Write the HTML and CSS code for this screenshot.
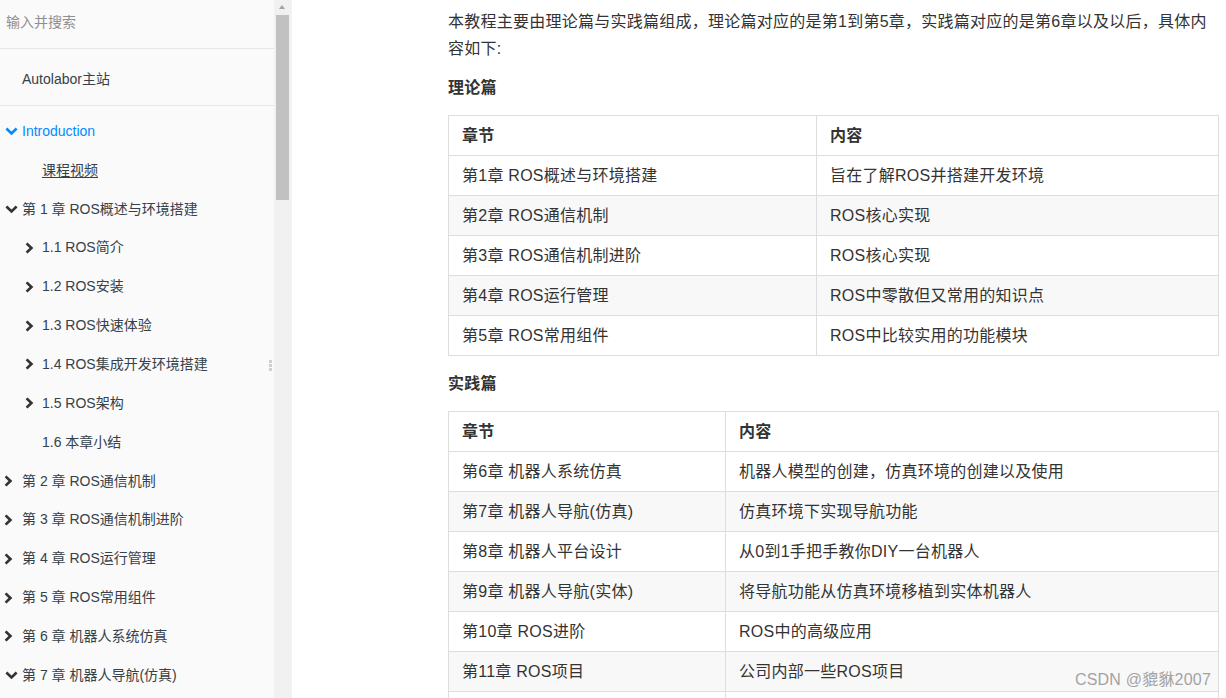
FILE: index.html
```html
<!DOCTYPE html>
<html lang="zh">
<head>
<meta charset="utf-8">
<title>ROS 教程</title>
<link rel="stylesheet" href="styles.css">
</head>
<body>
<div class="book">
  <aside class="sidebar">
    <div class="summary">
      <div class="search">输入并搜索</div>
      <ul class="links">
        <li class="row lv1 plain"><span class="label">Autolabor主站</span></li>
      </ul>
      <ul class="chapters">
        <li class="row lv1 active">
          <span class="ico"><svg width="13" height="9" viewBox="0 0 13 9"><polyline points="1.4,1.6 6.5,6.4 11.6,1.6" /></svg></span><span class="label">Introduction</span>
        </li>
        <li class="row lv2 noicon"><span class="label under">课程视频</span></li>
        <li class="row lv1">
          <span class="ico"><svg width="13" height="9" viewBox="0 0 13 9"><polyline points="1.4,1.6 6.5,6.4 11.6,1.6" /></svg></span><span class="label">第 1 章 ROS概述与环境搭建</span>
        </li>
        <li class="row lv2"><span class="ico"><svg width="9" height="12" viewBox="0 0 9 12"><polyline points="1.6,1.4 6.4,6 1.6,10.6" /></svg></span><span class="label">1.1 ROS简介</span></li>
        <li class="row lv2"><span class="ico"><svg width="9" height="12" viewBox="0 0 9 12"><polyline points="1.6,1.4 6.4,6 1.6,10.6" /></svg></span><span class="label">1.2 ROS安装</span></li>
        <li class="row lv2"><span class="ico"><svg width="9" height="12" viewBox="0 0 9 12"><polyline points="1.6,1.4 6.4,6 1.6,10.6" /></svg></span><span class="label">1.3 ROS快速体验</span></li>
        <li class="row lv2"><span class="ico"><svg width="9" height="12" viewBox="0 0 9 12"><polyline points="1.6,1.4 6.4,6 1.6,10.6" /></svg></span><span class="label">1.4 ROS集成开发环境搭建</span></li>
        <li class="row lv2"><span class="ico"><svg width="9" height="12" viewBox="0 0 9 12"><polyline points="1.6,1.4 6.4,6 1.6,10.6" /></svg></span><span class="label">1.5 ROS架构</span></li>
        <li class="row lv2 noicon"><span class="label">1.6 本章小结</span></li>
        <li class="row lv1"><span class="ico"><svg width="9" height="12" viewBox="0 0 9 12"><polyline points="1.6,1.4 6.4,6 1.6,10.6" /></svg></span><span class="label">第 2 章 ROS通信机制</span></li>
        <li class="row lv1"><span class="ico"><svg width="9" height="12" viewBox="0 0 9 12"><polyline points="1.6,1.4 6.4,6 1.6,10.6" /></svg></span><span class="label">第 3 章 ROS通信机制进阶</span></li>
        <li class="row lv1"><span class="ico"><svg width="9" height="12" viewBox="0 0 9 12"><polyline points="1.6,1.4 6.4,6 1.6,10.6" /></svg></span><span class="label">第 4 章 ROS运行管理</span></li>
        <li class="row lv1"><span class="ico"><svg width="9" height="12" viewBox="0 0 9 12"><polyline points="1.6,1.4 6.4,6 1.6,10.6" /></svg></span><span class="label">第 5 章 ROS常用组件</span></li>
        <li class="row lv1"><span class="ico"><svg width="9" height="12" viewBox="0 0 9 12"><polyline points="1.6,1.4 6.4,6 1.6,10.6" /></svg></span><span class="label">第 6 章 机器人系统仿真</span></li>
        <li class="row lv1"><span class="ico"><svg width="13" height="9" viewBox="0 0 13 9"><polyline points="1.4,1.6 6.5,6.4 11.6,1.6" /></svg></span><span class="label">第 7 章 机器人导航(仿真)</span></li>
      </ul>
    </div>
    <div class="scrollbar">
      <div class="sb-arrow"></div>
      <div class="sb-thumb"></div>
    </div>
    <div class="grip"><i></i><i></i><i></i></div>
  </aside>

  <main class="page">
    <div class="inner">
      <p class="intro">本教程主要由理论篇与实践篇组成，理论篇对应的是第1到第5章，实践篇对应的是第6章以及以后，具体内容如下:</p>
      <p class="part">理论篇</p>
      <table class="tbl t1">
        <colgroup><col class="c1"><col class="c2"></colgroup>
        <thead><tr><th>章节</th><th>内容</th></tr></thead>
        <tbody>
          <tr><td>第1章 ROS概述与环境搭建</td><td>旨在了解ROS并搭建开发环境</td></tr>
          <tr><td>第2章 ROS通信机制</td><td>ROS核心实现</td></tr>
          <tr><td>第3章 ROS通信机制进阶</td><td>ROS核心实现</td></tr>
          <tr><td>第4章 ROS运行管理</td><td>ROS中零散但又常用的知识点</td></tr>
          <tr><td>第5章 ROS常用组件</td><td>ROS中比较实用的功能模块</td></tr>
        </tbody>
      </table>
      <p class="part">实践篇</p>
      <table class="tbl t2">
        <colgroup><col class="c1"><col class="c2"></colgroup>
        <thead><tr><th>章节</th><th>内容</th></tr></thead>
        <tbody>
          <tr><td>第6章 机器人系统仿真</td><td>机器人模型的创建，仿真环境的创建以及使用</td></tr>
          <tr><td>第7章 机器人导航(仿真)</td><td>仿真环境下实现导航功能</td></tr>
          <tr><td>第8章 机器人平台设计</td><td>从0到1手把手教你DIY一台机器人</td></tr>
          <tr><td>第9章 机器人导航(实体)</td><td>将导航功能从仿真环境移植到实体机器人</td></tr>
          <tr><td>第10章 ROS进阶</td><td>ROS中的高级应用</td></tr>
          <tr><td>第11章 ROS项目</td><td>公司内部一些ROS项目</td></tr>
          <tr><td>&nbsp;</td><td>&nbsp;</td></tr>
        </tbody>
      </table>
    </div>
  </main>
  <div class="watermark">CSDN @貔貅2007</div>
</div>
</body>
</html>
```

FILE: styles.css
```css
html, body {
  margin: 0;
  padding: 0;
  height: 698px;
  overflow: hidden;
  background: #fff;
}

body {
  font-family: "Liberation Sans", Arial, "Noto Sans CJK SC", sans-serif;
  color: #333;
}

.book {
  display: flex;
  height: 698px;
  position: relative;
}

/* ---------- sidebar ---------- */
.sidebar {
  position: relative;
  width: 291px;
  flex: none;
  display: flex;
  background: #fafafa;
  border-right: 1px solid #f3f3f3;
  overflow: hidden;
}

.summary {
  width: 274px;
  flex: none;
  font-size: 14px;
  color: #364149;
}

.search {
  height: 49px;
  box-sizing: border-box;
  padding: 12px 6px 0;
  line-height: 20px;
  color: #8f8f8f;
  border-bottom: 1px solid #e6e6e6;
}

.summary ul {
  list-style: none;
  margin: 0;
}

.links {
  padding: 11px 0 6px;
  border-bottom: 1px solid #e6e6e6;
}

.chapters {
  padding: 6px 0 0;
}

.row {
  display: flex;
  align-items: center;
  padding: 10px 0;
  line-height: 18.86px;
  white-space: nowrap;
}

.row.lv1 {
  padding-left: 5px;
}

.row.lv2 {
  padding-left: 25px;
}

.row.plain,
.row.noicon.lv1 {
  padding-left: 22px;
}

.row.noicon.lv2 {
  padding-left: 42px;
}

.ico {
  width: 17px;
  flex: none;
  display: flex;
  align-items: center;
}

.ico svg {
  display: block;
}

.ico polyline {
  fill: none;
  stroke: #333;
  stroke-width: 2.7;
  stroke-linecap: butt;
  stroke-linejoin: miter;
}

.row.lv1 .ico svg[width="9"] {
  margin-left: -1px;
}

.active {
  color: #008cff;
}

.active .ico polyline {
  stroke: #008cff;
}

.under {
  text-decoration: underline;
  text-underline-offset: 2px;
}

/* fake scrollbar */
.scrollbar {
  width: 17px;
  flex: none;
  background: #f1f1f1;
  position: relative;
}

.sb-arrow {
  position: absolute;
  top: 5px;
  left: 5px;
  width: 0;
  height: 0;
  border-left: 3.5px solid transparent;
  border-right: 3.5px solid transparent;
  border-bottom: 4px solid #a3a3a3;
}

.sb-thumb {
  position: absolute;
  top: 15px;
  left: 2px;
  width: 13px;
  height: 185px;
  background: #c1c1c1;
}

.grip {
  position: absolute;
  left: 269px;
  top: 360px;
  display: flex;
  flex-direction: column;
  gap: 1px;
}

.grip i {
  display: block;
  width: 3px;
  height: 3px;
  background: #cfcfcf;
}

/* ---------- page ---------- */
.page {
  flex: 1;
  padding-left: 156px;
  overflow: hidden;
}

.inner {
  width: 770px;
  padding-top: 8px;
  font-size: 16px;
  letter-spacing: 0.25px;
}

.intro {
  margin: 0 0 12px;
  line-height: 27px;
}

.part {
  margin: 0 0 14px;
  line-height: 27px;
  font-weight: bold;
}

.tbl {
  border-collapse: collapse;
  border-spacing: 0;
  table-layout: fixed;
  width: 770px;
  margin: 0 0 14px;
}

.t1 .c1 { width: 368px; }
.t1 .c2 { width: 402px; }
.t2 .c1 { width: 277px; }
.t2 .c2 { width: 493px; }

.tbl th,
.tbl td {
  border: 1px solid #ddd;
  padding: 6px 13px;
  line-height: 27px;
  text-align: left;
  white-space: nowrap;
}

.tbl th {
  font-weight: bold;
}

.tbl tbody tr:nth-child(2n) td {
  background: #f8f8f8;
}

.watermark {
  position: absolute;
  right: 15px;
  bottom: 8px;
  font-size: 16px;
  line-height: 20px;
  color: #a3a3a3;
  letter-spacing: 0.2px;
}
```
